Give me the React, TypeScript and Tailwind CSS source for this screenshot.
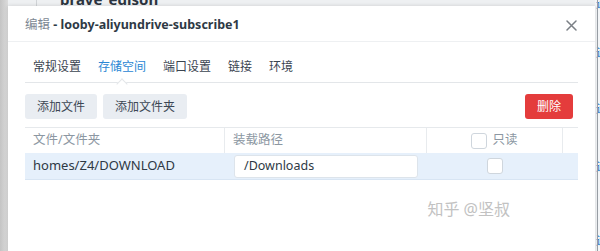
import React from "react";

const cjk = { fontFamily: '"Noto Sans", "Noto Sans CJK SC", sans-serif' };

function Checkbox() {
  return <span className="inline-block w-[16px] h-[16px] rounded-[3px] border border-[#cfd6dd] bg-white" />;
}

export default function App() {
  const tabs = ["常规设置", "存储空间", "端口设置", "链接", "环境"];
  return (
    <div className="relative w-[600px] h-[251px] overflow-hidden bg-[#eef0f2]" style={cjk}>
      {/* desktop background behind the dialog */}
      <div className="absolute left-0 top-0 w-[8px] h-[251px] bg-gradient-to-r from-[#c4c4c4] to-[#dcdcdc]" />
      <div className="absolute left-[36px] top-0 w-px h-[6px] bg-[#d0d3d6]" />
      <div className="absolute left-[60px] top-[-9px] text-[15px] font-bold text-[#2b3440] leading-[16px]">brave_edison</div>
      <div className="absolute left-[595px] top-0 w-[5px] h-[251px] bg-[#f4f6f8]">
        <div className="absolute left-[1px] top-[-5px] text-[12px] text-[#2a78c8] whitespace-nowrap">运</div>
        <div className="absolute left-[1px] top-[44px] text-[12px] text-[#2a78c8] whitespace-nowrap">运</div>
        <div className="absolute left-[1px] top-[100px] text-[12px] text-[#2a78c8] whitespace-nowrap">运</div>
        <div className="absolute left-[1px] top-[158px] text-[12px] text-[#2a78c8] whitespace-nowrap">运</div>
        <div className="absolute left-[1px] top-[232px] text-[12px] text-[#2a78c8] whitespace-nowrap">运</div>
        <div className="absolute left-[2px] top-0 w-px h-[251px] bg-[#9aa0a6]" />
      </div>

      {/* dialog window */}
      <div className="absolute left-[8px] top-[6px] w-[587px] h-[260px] bg-white shadow-[0_0_4px_rgba(0,0,0,0.15)] flex flex-col">
        <div className="h-[36px] flex items-center justify-between pl-[17px] pr-[18px] border-b border-[#eef0f2]">
          <div className="text-[12.5px] leading-none whitespace-nowrap mt-[3px]">
            <span className="text-[#7d8893]">编辑</span>
            <span className="font-bold text-[#2e3945]"> - looby-aliyundrive-subscribe1</span>
          </div>
          <svg width="11" height="11" viewBox="0 0 11 11" className="mt-[3px]">
            <path d="M1 1L10 10M10 1L1 10" stroke="#7a7f85" strokeWidth="1.5" strokeLinecap="round" />
          </svg>
        </div>

        <div className="px-[17px] flex flex-col">
          <div className="relative h-[41px] flex gap-[17px] pl-[8px] border-b border-[#e3e6e9]">
            {tabs.map((t, i) => (
              <div key={t} className={`relative h-[41px] pt-[15px] text-[12px] leading-[20px] ${i === 1 ? "text-[#2a86d4]" : "text-[#3a4450]"}`}>
                {t}
                {i === 1 && (
                  <span className="absolute left-1/2 -translate-x-1/2 bottom-[-4.5px] w-[8px] h-[8px] rotate-45 bg-white border-l border-t border-[#e3e6e9]" />
                )}
              </div>
            ))}
          </div>

          <div className="mt-[11px] flex items-center gap-[6px]">
            <button className="h-[25px] w-[72px] rounded-[3px] bg-[#e9edf2] text-[12px] text-[#3c4754]">添加文件</button>
            <button className="h-[25px] w-[84px] rounded-[3px] bg-[#e9edf2] text-[12px] text-[#3c4754]">添加文件夹</button>
            <div className="flex-1" />
            <button className="h-[25px] w-[48px] mr-[5px] rounded-[3px] bg-[#e43c3c] text-[12px] text-white">删除</button>
          </div>

          <div className="mt-[8px] border-t border-[#e6e9ec]">
            <div className="flex h-[25px] text-[12.5px] text-[#8c97a2]">
              <div className="w-[200px] pl-[8px] flex items-center border-r border-[#e8ebee]">文件/文件夹</div>
              <div className="w-[202px] pl-[8px] flex items-center border-r border-[#e8ebee]">装载路径</div>
              <div className="w-[136px] flex items-center justify-center gap-[5px] border-r border-[#e8ebee]">
                <Checkbox />
                <span>只读</span>
              </div>
              <div className="flex-1" />
            </div>
            <div className="flex h-[27px] items-center bg-[#e6f0fb] border-b border-[#d8e5f3] text-[13px] text-[#2e3945]">
              <div className="w-[200px] pl-[8px]">homes/Z4/DOWNLOAD</div>
              <div className="w-[202px] pl-[9px]">
                <div className="w-[184px] h-[23px] rounded-[3px] bg-white border border-[#dde4eb] pl-[9px] flex items-center text-[12.5px]">/Downloads</div>
              </div>
              <div className="w-[136px] flex justify-center">
                <Checkbox />
              </div>
            </div>
          </div>

          <div className="mt-[17px] flex justify-end pr-[68px]">
            <span className="text-[16px] text-[#c2c2c2] [text-shadow:1px_1px_0_#ffffff]">知乎 @坚叔</span>
          </div>
        </div>
      </div>
    </div>
  );
}
